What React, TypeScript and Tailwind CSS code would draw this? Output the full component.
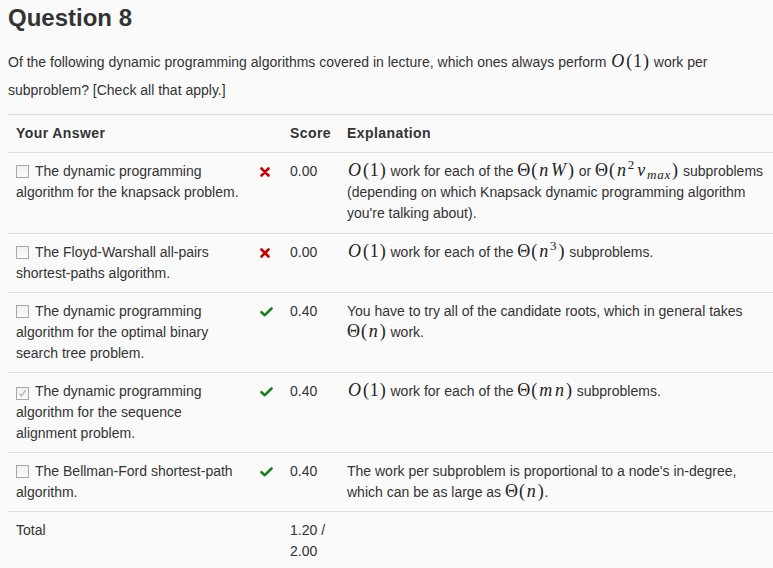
import type { ReactNode } from 'react';

const serif = "font-['Liberation_Serif','Times_New_Roman',serif]";

function M({ children }: { children: ReactNode }) {
  return <span className={`${serif} text-[18px] leading-none tracking-[0.05em] text-[#222]`}>{children}</span>;
}

function V({ children }: { children: ReactNode }) {
  return <i className="pl-[1px] pr-[1px]">{children}</i>;
}

function Sup({ children }: { children: ReactNode }) {
  return <span className="relative -top-[7px] text-[13px] pr-[1px]">{children}</span>;
}

function Sub({ children }: { children: ReactNode }) {
  return <span className="relative top-[3px] text-[13px] italic tracking-[0.06em] pr-[1px]">{children}</span>;
}

function CheckBox({ checked }: { checked?: boolean }) {
  return (
    <span className="inline-flex items-center justify-center w-[13px] h-[13px] border border-[#a8a8a8] bg-gradient-to-b from-[#f0f0f0] to-[#fbfbfb] align-[-2px] mr-[6px]">
      {checked && (
        <svg width="9" height="9" viewBox="0 0 9 9">
          <path d="M1.5 4.8 L3.5 7 L7.8 1.2" fill="none" stroke="#b5b5b5" strokeWidth="1.4" />
        </svg>
      )}
    </span>
  );
}

function Wrong() {
  return (
    <svg width="10" height="10" viewBox="0 0 10 10" className="mt-[6px]">
      <path d="M1.5 1.5 L8.5 8.5 M8.5 1.5 L1.5 8.5" stroke="#c40000" strokeWidth="2.6" strokeLinecap="round" />
    </svg>
  );
}

function Right() {
  return (
    <svg width="13" height="10" viewBox="0 0 13 10" className="mt-[6px]">
      <path d="M1.5 5.2 L4.8 8.2 L11.5 1.5" fill="none" stroke="#1d7f1d" strokeWidth="2.6" strokeLinecap="round" strokeLinejoin="round" />
    </svg>
  );
}

type Row = { answer: string; checked?: boolean; ok: boolean; score: string; explanation: ReactNode; tall?: boolean };

const rows: Row[] = [
  {
    answer: 'The dynamic programming algorithm for the knapsack problem.',
    ok: false,
    score: '0.00',
    tall: true,
    explanation: (
      <>
        <M><V>O</V>(1)</M> work for each of the <M>Θ(<V>n</V><V>W</V>)</M> or{' '}
        <M>Θ(<V>n</V><Sup>2</Sup><V>v</V><Sub>max</Sub>)</M> subproblems (depending on which Knapsack dynamic
        programming algorithm you're talking about).
      </>
    ),
  },
  {
    answer: 'The Floyd-Warshall all-pairs shortest-paths algorithm.',
    ok: false,
    score: '0.00',
    explanation: (
      <>
        <M><V>O</V>(1)</M> work for each of the <M>Θ(<V>n</V><Sup>3</Sup>)</M> subproblems.
      </>
    ),
  },
  {
    answer: 'The dynamic programming algorithm for the optimal binary search tree problem.',
    ok: true,
    score: '0.40',
    explanation: (
      <>
        You have to try all of the candidate roots, which in general takes <M>Θ(<V>n</V>)</M> work.
      </>
    ),
  },
  {
    answer: 'The dynamic programming algorithm for the sequence alignment problem.',
    checked: true,
    ok: true,
    score: '0.40',
    explanation: (
      <>
        <M><V>O</V>(1)</M> work for each of the <M>Θ(<V>m</V><V>n</V>)</M> subproblems.
      </>
    ),
  },
  {
    answer: 'The Bellman-Ford shortest-path algorithm.',
    ok: true,
    score: '0.40',
    explanation: (
      <>
        The work per subproblem is proportional to a node's in-degree, which can be as large as <M>Θ(<V>n</V>)</M>.
      </>
    ),
  },
];

export default function App() {
  return (
    <div className="w-[773px] h-[568px] overflow-hidden bg-[#fafafa] text-[#333] font-['Liberation_Sans',Arial,sans-serif] text-[14px]">
      <div className="pl-2 pt-[5px]">
        <h1 className="text-[24px] leading-[26px] font-bold">Question 8</h1>
        <p className="mt-[17px] leading-[28px] w-[720px]">
          Of the following dynamic programming algorithms covered in lecture, which ones always perform{' '}
          <M><V>O</V>(1)</M> work per subproblem? [Check all that apply.]
        </p>

        <table className="mt-[10px] table-fixed w-[773px] leading-[21px] border-t border-[#dddddd]">
          <colgroup>
            <col className="w-[244px]" />
            <col className="w-[30px]" />
            <col className="w-[57px]" />
            <col className="w-[442px]" />
          </colgroup>
          <thead>
            <tr className="border-b border-[#dddddd] text-left tracking-[0.03em]">
              <th className="px-2 py-2 font-bold">Your Answer</th>
              <th className="px-2 py-2"></th>
              <th className="px-2 py-2 font-bold">Score</th>
              <th className="px-2 py-2 font-bold">Explanation</th>
            </tr>
          </thead>
          <tbody>
            {rows.map((r, i) => (
              <tr key={i} className="border-b border-[#dddddd] align-top">
                <td className="px-2 py-2">
                  <CheckBox checked={r.checked} />
                  {r.answer}
                </td>
                <td className="px-2 py-2">{r.ok ? <Right /> : <Wrong />}</td>
                <td className="px-2 py-2">{r.score}</td>
                <td className={r.tall ? 'px-2 pt-2 pb-[9px]' : 'px-2 py-2'}>{r.explanation}</td>
              </tr>
            ))}
            <tr className="align-top">
              <td className="px-2 py-2">Total</td>
              <td className="px-2 py-2"></td>
              <td className="px-2 py-2">1.20 / 2.00</td>
              <td className="px-2 py-2"></td>
            </tr>
          </tbody>
        </table>
      </div>
    </div>
  );
}
